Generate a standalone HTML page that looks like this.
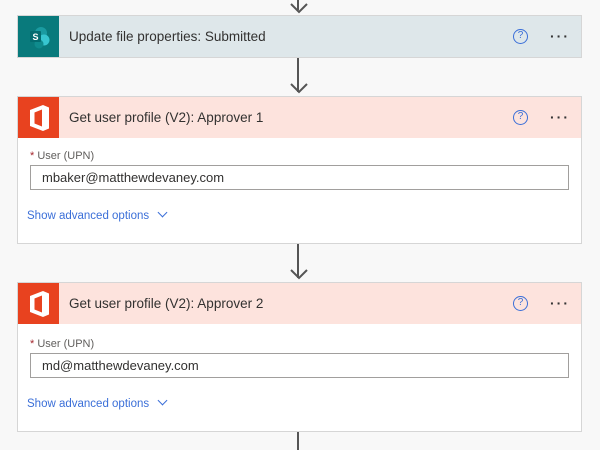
<!DOCTYPE html>
<html><head><style>
*{box-sizing:border-box;margin:0;padding:0}
body{width:600px;height:450px;background:#f8f8f8;font-family:"Liberation Sans",sans-serif;position:relative;overflow:hidden;color:#323130}
.card{position:absolute;left:17px;width:565px;border:1px solid #d6d6d6;background:#fff}
.hd{height:41px;position:relative;display:flex;align-items:center}
.ic{width:41px;height:41px;display:flex;align-items:center;justify-content:center}
.t{margin-left:10px;font-size:13.5px;color:#323130}
.q{position:absolute;right:53px;top:13px;width:15px;height:15px;border:1.5px solid #3b6fd8;border-radius:50%;font-size:10px;color:#3b6fd8;text-align:center;line-height:12px}
.dots{position:absolute;right:11px;top:12px;font-size:14px;letter-spacing:2px;color:#333;font-weight:bold}
.lbl{position:absolute;left:12px;font-size:11px;color:#605e5c}
.lbl b{color:#a4262c;font-weight:normal}
.in{position:absolute;left:12px;width:539px;height:25px;border:1px solid #a19f9d;font-size:13px;padding:4px 11px;color:#323130}
.adv{position:absolute;left:9px;font-size:11.5px;color:#3b6fd8}
.arr{position:absolute;left:297px;width:2px;background:#555}
</style></head><body>
<div class="arr" style="top:0;height:10px"></div>
<svg style="position:absolute;left:290px;top:0" width="18" height="14"><path d="M1 4 L9 12 L17 4" stroke="#555" stroke-width="2" fill="none"/></svg>
<div class="card" style="top:15px;height:43px">
<div class="hd" style="background:#dee7ea">
<div class="ic" style="background:#097a7c"><svg width="24" height="24"><circle cx="14" cy="8" r="6" fill="#1a9ba1"/><circle cx="17" cy="15" r="5.5" fill="#37c6d0"/><circle cx="12" cy="19" r="4.5" fill="#0f8b8d"/><rect x="3" y="6" width="11" height="11" rx="1" fill="#036c70"/><text x="5.5" y="15" font-size="9" font-weight="bold" fill="#fff" font-family="Liberation Sans">S</text></svg></div>
<div class="t">Update file properties: Submitted</div><div class="q">?</div><div class="dots">···</div></div></div>
<div class="arr" style="top:58px;height:34px"></div>
<svg style="position:absolute;left:290px;top:80px" width="18" height="14"><path d="M1 4 L9 12 L17 4" stroke="#555" stroke-width="2" fill="none"/></svg>
<div class="card" style="top:96px;height:148px">
<div class="hd" style="background:#fde3dd">
<div class="ic" style="background:#e8421f"><svg width="24" height="28"><path d="M3 6 L16 1 L22 3.5 L22 24.5 L16 27 L3 22 Z M7.5 8.5 L7.5 19.5 L15 22.5 L15 5.5 Z" fill="#fff" fill-rule="evenodd"/></svg></div>
<div class="t">Get user profile (V2): Approver 1</div><div class="q">?</div><div class="dots">···</div></div>
<div class="lbl" style="top:53px"><b>*</b> User (UPN)</div>
<div class="in" style="top:68px">mbaker@matthewdevaney.com</div>
<div class="adv" style="top:112px">Show advanced options &nbsp; <span style="display:inline-block;width:7px;height:7px;border-right:1px solid #3b6fd8;border-bottom:1px solid #3b6fd8;transform:rotate(45deg);margin-bottom:3px"></span></div>
</div>
<div class="arr" style="top:244px;height:34px"></div>
<svg style="position:absolute;left:290px;top:266px" width="18" height="14"><path d="M1 4 L9 12 L17 4" stroke="#555" stroke-width="2" fill="none"/></svg>
<div class="card" style="top:282px;height:150px">
<div class="hd" style="background:#fde3dd">
<div class="ic" style="background:#e8421f"><svg width="24" height="28"><path d="M3 6 L16 1 L22 3.5 L22 24.5 L16 27 L3 22 Z M7.5 8.5 L7.5 19.5 L15 22.5 L15 5.5 Z" fill="#fff" fill-rule="evenodd"/></svg></div>
<div class="t">Get user profile (V2): Approver 2</div><div class="q">?</div><div class="dots">···</div></div>
<div class="lbl" style="top:55px"><b>*</b> User (UPN)</div>
<div class="in" style="top:70px">md@matthewdevaney.com</div>
<div class="adv" style="top:114px">Show advanced options &nbsp; <span style="display:inline-block;width:7px;height:7px;border-right:1px solid #3b6fd8;border-bottom:1px solid #3b6fd8;transform:rotate(45deg);margin-bottom:3px"></span></div>
</div>
<div class="arr" style="top:432px;height:18px"></div>
</body></html>
